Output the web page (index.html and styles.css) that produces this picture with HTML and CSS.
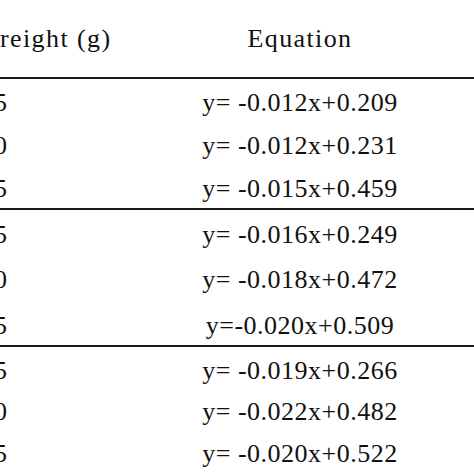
FILE: index.html
```
<!DOCTYPE html>
<html>
	<head>
		<meta charset="utf-8">
		<title>Equation table</title>
		<link rel="stylesheet" href="styles.css">
	</head>
	<body>
		<div class="crop">
			<table class="eq-table">
				<thead>
					<tr>
						<th class="col-w">reight (g)</th>
						<th class="col-eq">Equation</th>
					</tr>
				</thead>
				<tbody class="g1">
					<tr><td class="col-w">5</td><td class="col-eq">y= -0.012x+0.209</td></tr>
					<tr><td class="col-w">0</td><td class="col-eq">y= -0.012x+0.231</td></tr>
					<tr><td class="col-w">5</td><td class="col-eq">y= -0.015x+0.459</td></tr>
				</tbody>
				<tbody class="g2">
					<tr><td class="col-w">5</td><td class="col-eq">y= -0.016x+0.249</td></tr>
					<tr><td class="col-w">0</td><td class="col-eq">y= -0.018x+0.472</td></tr>
					<tr><td class="col-w">5</td><td class="col-eq">y=-0.020x+0.509</td></tr>
				</tbody>
				<tbody class="g3">
					<tr><td class="col-w">5</td><td class="col-eq">y= -0.019x+0.266</td></tr>
					<tr><td class="col-w">0</td><td class="col-eq">y= -0.022x+0.482</td></tr>
					<tr><td class="col-w">5</td><td class="col-eq">y= -0.020x+0.522</td></tr>
				</tbody>
			</table>
		</div>
	</body>
</html>
```
FILE: styles.css
```
body {
	margin: 0;
	background: #fff;
}

.crop {
	width: 474px;
	height: 474px;
	overflow: hidden;
}

.eq-table {
	width: 474px;
	border-collapse: collapse;
	font-family: "Liberation Serif", "Times New Roman", serif;
	font-size: 26px;
	letter-spacing: 0.5px;
	line-height: 1;
	color: #111;
}

.eq-table th {
	font-weight: normal;
	letter-spacing: 1.4px;
	height: 77px;
	padding: 0;
	vertical-align: middle;
	border-bottom: 2px solid #1a1a1a;
}

.eq-table td {
	padding: 6px 0 0 0;
	vertical-align: middle;
}

.eq-table tbody + tbody tr:first-child td {
	border-top: 2px solid #1a1a1a;
}

.g1 tr {
	height: 43.6px;
}

.g2 tr {
	height: 45.8px;
}

.g3 tr {
	height: 42px;
}

.col-w {
	width: 126px;
	text-align: left;
}

td.col-w {
	text-indent: -6px;
}

.col-eq {
	text-align: center;
}
```
